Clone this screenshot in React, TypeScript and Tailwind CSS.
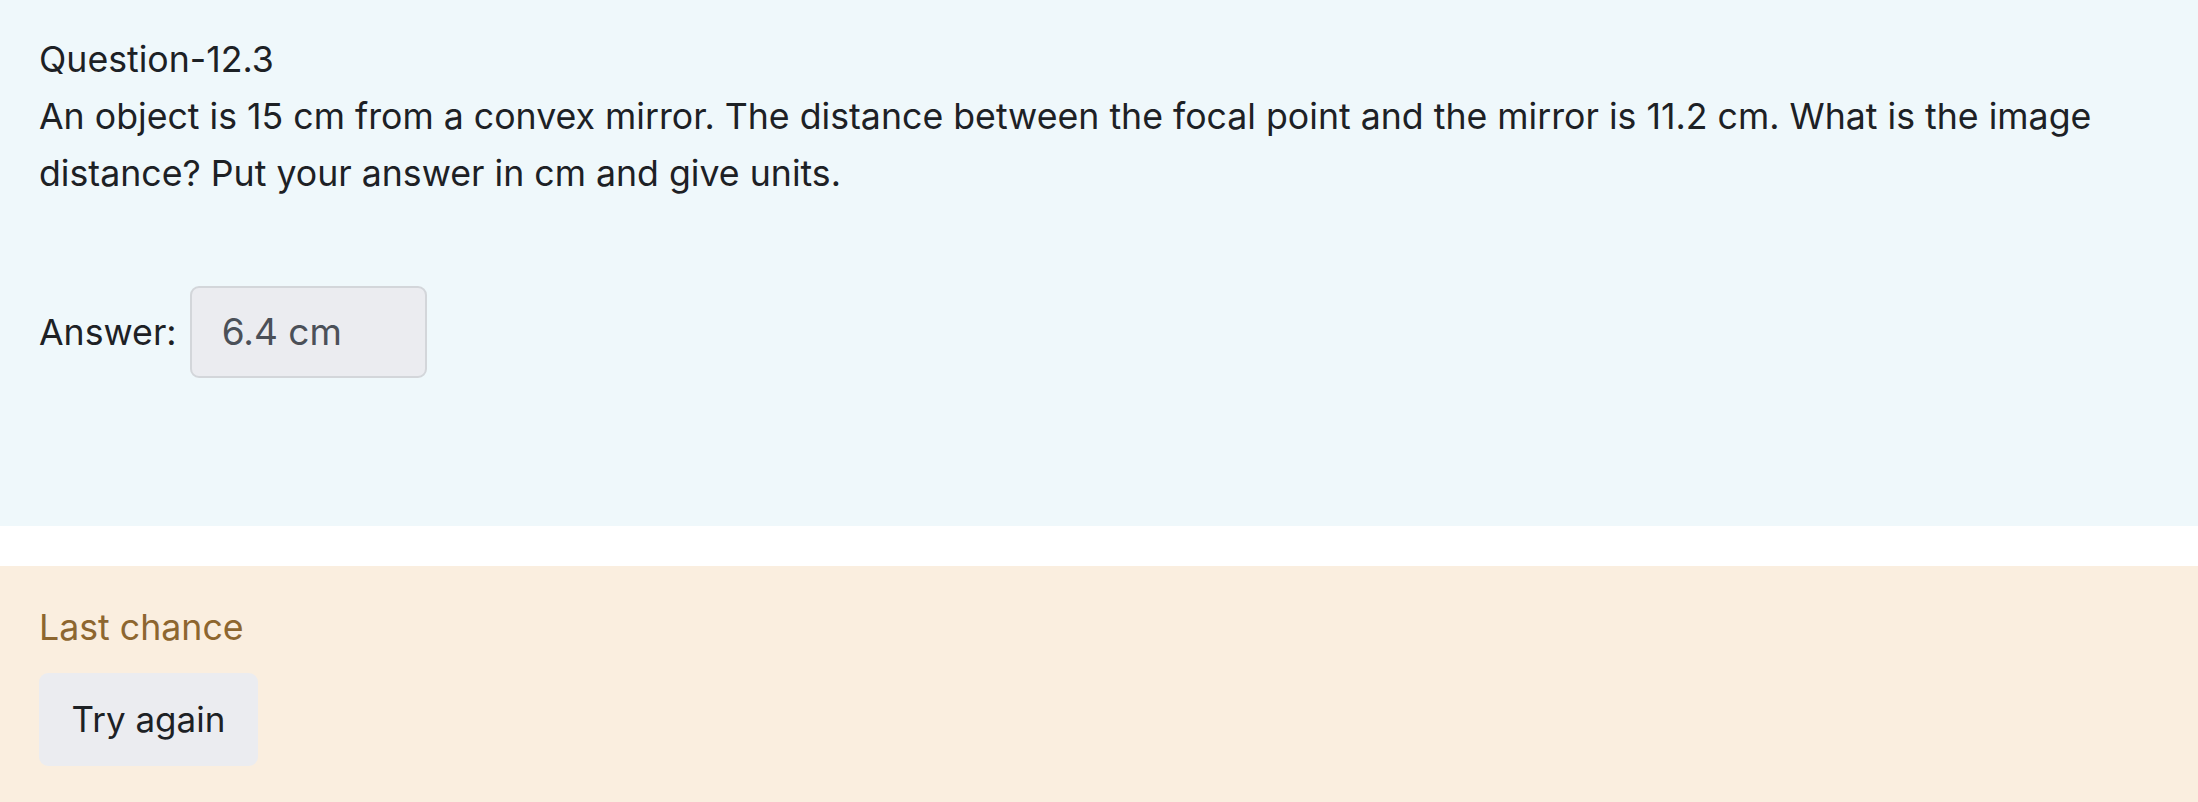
export default function App() {
  return (
    <div
      className="w-[2198px] h-[802px] bg-white text-[#1d2125] overflow-hidden"
      style={{ fontFamily: 'Inter, "Noto Sans", sans-serif' }}
    >
      {/* formulation */}
      <section className="h-[526px] bg-[#eff8fb] px-[39px] pt-[31px]">
        <h3 className="text-[35.7px] leading-[57px] font-normal">Question-12.3</h3>
        <p className="text-[35.7px] leading-[57px] max-w-[2110px]">
          An object is 15 cm from a convex mirror. The distance between the focal point and the mirror is 11.2 cm.
          What is the image distance? Put your answer in cm and give units.
        </p>
        <div className="mt-[84px] flex items-center gap-[13px]">
          <label className="text-[35.7px] leading-[57px]">Answer:</label>
          <div className="flex h-[92px] w-[237px] items-center rounded-[9px] border-2 border-[#d3d6da] bg-[#ebecf0] px-[30px] text-[37px] text-[#4b5058]">
            6.4 cm
          </div>
        </div>
      </section>

      <div className="h-[40px]" />

      {/* outcome */}
      <section className="h-[236px] bg-[#faeedf] px-[39px] pt-[32px]">
        <p className="text-[35.7px] leading-[58px] text-[#8d662f]">Last chance</p>
        <button className="mt-[17px] flex h-[93px] w-[219px] items-center justify-center rounded-[9px] bg-[#ebecf0] text-[35px] text-[#1d2125]">
          Try again
        </button>
      </section>
    </div>
  );
}
